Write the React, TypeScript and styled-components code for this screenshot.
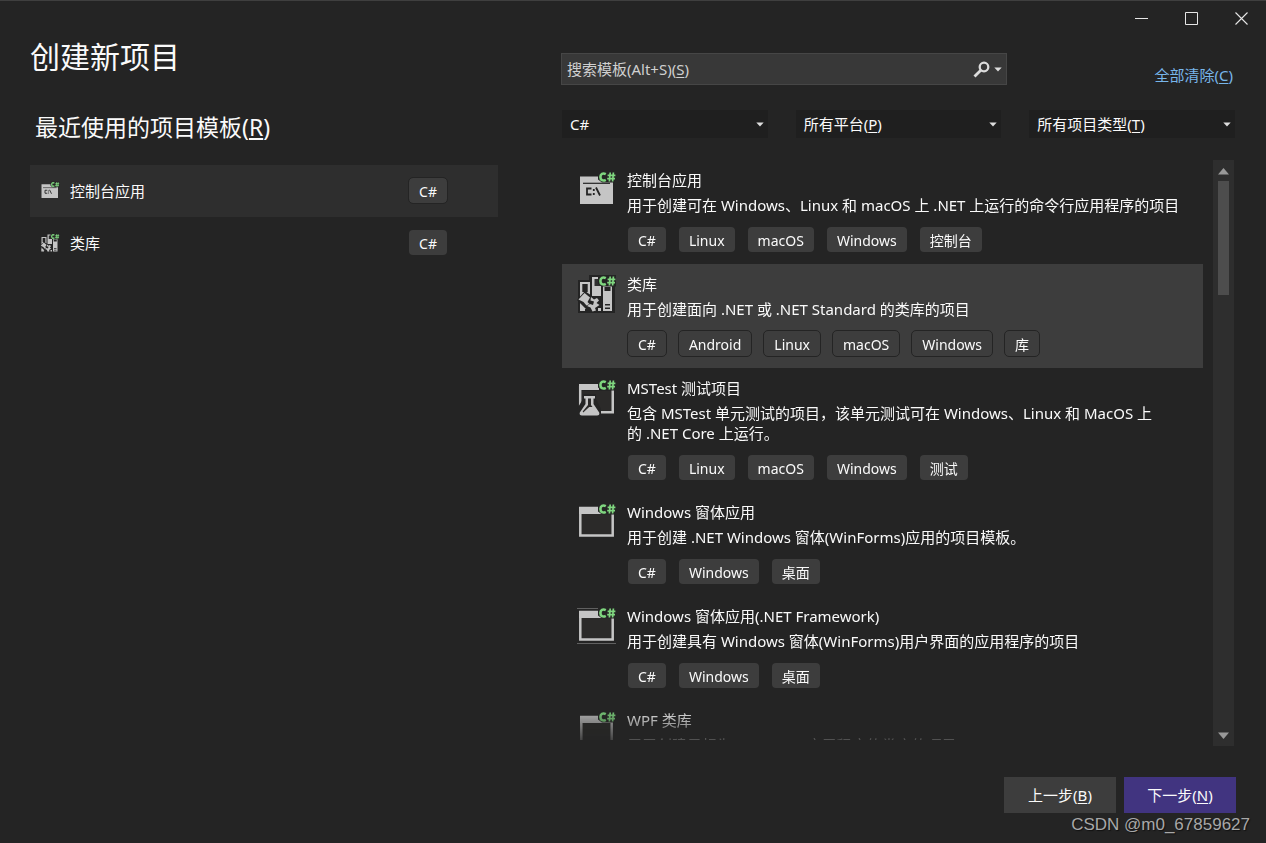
import React, { useId, useState } from "react";
import styled, { createGlobalStyle, css } from "styled-components";

const GlobalStyle = createGlobalStyle`
  *, *::before, *::after { box-sizing: border-box; }
  body {
    margin: 0;
    background: #242424;
    color: #fafafa;
    font: 15px/20px "Noto Sans", "Noto Sans CJK SC", sans-serif;
  }
  button, input, select { font: inherit; color: inherit; }
  h1, h2, h3, p, ul { margin: 0; padding: 0; font-weight: 400; }
  ul { list-style: none; }
`;

const Window = styled.div`
  position: relative;
  display: flex;
  flex-direction: column;
  height: 100vh;
  min-height: 480px;
  border-top: 1px solid #3f3f3f;
`;

const TitleBar = styled.header`
  display: flex;
  justify-content: flex-end;
  height: 36px;
  flex: none;
`;

const CaptionButton = styled.button`
  display: grid;
  place-items: center;
  width: 50px;
  padding: 0 1px 1px 0;
  border: 0;
  background: none;
  &:last-child { width: 49px; padding-right: 0; }
  &:hover { background: #3d3d3d; }
`;

const Content = styled.main`
  flex: 1;
  min-height: 0;
  display: grid;
  grid-template-columns: 468fr 675fr;
  gap: 63px;
  padding: 0 30px;
`;

const RecentPanel = styled.section`
  min-width: 0;
`;

const PageTitle = styled.h1`
  font-size: 30px;
  line-height: 40px;
`;

const RecentHeading = styled.h2`
  margin: 34px 0 22px;
  padding-left: 5px;
  font-size: 23px;
  line-height: 32px;
`;

const RecentItem = styled.li<{ $active?: boolean }>`
  display: flex;
  align-items: center;
  gap: 10px;
  height: 52px;
  padding: 0 50px 1px 10px;
  background: ${(p) => (p.$active ? "#2e2e2e" : "transparent")};
`;

const RecentName = styled.span`
  flex: 1;
`;

const Tag = styled.span<{ $outlined?: boolean }>`
  height: 27px;
  padding: 0 10px;
  border: 1px solid ${(p) => (p.$outlined ? "#242424" : "transparent")};
  border-radius: 5px;
  background: #3d3d3d;
  background-clip: padding-box;
  font-size: 14px;
  line-height: 27px;
  white-space: nowrap;
`;

const BrowsePanel = styled.section`
  min-width: 0;
  min-height: 0;
  display: flex;
  flex-direction: column;
  padding-top: 16px;
`;

const SearchRow = styled.div`
  display: flex;
  justify-content: space-between;
`;

const SearchBox = styled.div`
  position: relative;
  display: flex;
  align-items: center;
  width: 66%;
  height: 32px;
  padding-right: 2px;
  border: 1px solid #464646;
  background: #383838;
`;

const SearchInput = styled.input`
  flex: 1;
  min-width: 0;
  height: 100%;
  padding: 0 5px;
  border: 0;
  outline: 0;
  background: none;
`;

const FloatingLabel = styled.label<{ $muted?: boolean }>`
  position: absolute;
  left: ${(p) => (p.$muted ? 5 : 8)}px;
  top: 50%;
  transform: translateY(-50%);
  pointer-events: none;
  color: ${(p) => (p.$muted ? "#d0d0d0" : "#fafafa")};
`;

const Key = styled.span`
  text-decoration: underline;
  text-underline-offset: 2px;
`;

const IconButton = styled.button`
  display: grid;
  place-items: center;
  padding: 4px 2px;
  border: 0;
  background: none;
`;

const ClearLink = styled.a`
  align-self: flex-end;
  margin-right: 3px;
  color: #78b6ea;
  text-decoration: none;
`;

const Filters = styled.div`
  display: grid;
  grid-template-columns: repeat(3, 1fr);
  gap: 28px;
  margin: 25px 1px 22px;
`;

const FilterBox = styled.div`
  position: relative;
  display: flex;
  align-items: center;
  height: 28px;
  background: #1f1f1f;
  & > svg { position: absolute; right: 4px; pointer-events: none; }
`;

const FilterSelect = styled.select`
  width: 100%;
  height: 100%;
  padding: 0 20px 0 8px;
  border: 0;
  outline: 0;
  appearance: none;
  background: #1f1f1f;
`;

const ListArea = styled.div`
  flex: 1;
  min-height: 0;
  display: flex;
  gap: 10px;
  margin: 0 2px 0 1px;
`;

const TemplateList = styled.ul`
  flex: 1;
  min-width: 0;
  margin-bottom: 6px;
  overflow: hidden;
  mask-image: linear-gradient(#000 calc(100% - 34px), rgba(0, 0, 0, 0.2));
`;

const Template = styled.li<{ $selected?: boolean }>`
  display: flex;
  gap: 10px;
  padding: 10px 16px 11px 15px;
  background: ${(p) => (p.$selected ? "#3d3d3d" : "transparent")};
`;

const TemplateBody = styled.div`
  flex: 1;
  min-width: 0;
`;

const TemplateName = styled.h3`
  font-size: 15px;
  line-height: 20px;
`;

const TemplateText = styled.p`
  margin: 5px 0 11px;
`;

const Tags = styled.div`
  display: flex;
  flex-wrap: wrap;
  gap: 11px;
`;

const ScrollBar = styled.div`
  display: flex;
  flex-direction: column;
  align-items: center;
  width: 21px;
  padding: 8px 0 7px;
  background: #2e2e2e;
`;

const ScrollTrack = styled.div`
  flex: 1;
  width: 11px;
  margin: 6px 0;
`;

const ScrollThumb = styled.div`
  height: 21%;
  background: #4d4d4d;
`;

const Footer = styled.footer`
  display: flex;
  justify-content: flex-end;
  gap: 8px;
  padding: 31px 30px 30px;
`;

const StepButton = styled.button<{ $primary?: boolean }>`
  width: 112px;
  height: 36px;
  padding: 0;
  border: 0;
  ${(p) =>
    p.$primary
      ? css`background: #413480;`
      : css`background: #3d3d3d;`}
`;

const Watermark = styled.div`
  position: absolute;
  right: 16px;
  bottom: 8px;
  color: #a8a8a8;
  font: 17px/20px "Liberation Sans", sans-serif;
  text-shadow: 1px 1px 1px #111;
`;

const Caret = () => (
  <svg width="8" height="5" viewBox="0 0 8 5" aria-hidden="true">
    <path d="M0.3 0.5h7.4L4 4.5z" fill="#dedede" />
  </svg>
);

const ScrollArrow = ({ up }: { up?: boolean }) => (
  <svg width="11" height="7" viewBox="0 0 11 7" aria-hidden="true">
    <path d={up ? "M0 6.5h11L5.5 0z" : "M0 0.5h11L5.5 7z"} fill="#999" />
  </svg>
);

type IconKind = "console" | "library" | "test" | "form" | "framework" | "wpf";

const LIGHT = "#c5c5c5";

const CSharpBadge = () => (
  <g>
    <path d="M21 1h18v11.500H25l-4-3z" fill="#242424" />
    <g fill="none" stroke="#7fd67f">
      <path d="M28.800 4.200C25.800 2.600 23.400 3.900 23.400 7s2.400 4.400 5.400 2.800" strokeWidth="2.600" />
      <path d="M33.200 2.500l-.8 9M36.400 2.500l-.8 9M30.600 5.300h7.800M30.200 8.700h7.800" strokeWidth="1.700" />
    </g>
  </g>
);

const iconShapes: Record<IconKind, React.ReactNode> = {
  console: (
    <>
      <path d="M3 6.500h33V34H3z" fill={LIGHT} />
      <path d="M6 13.300h27" stroke="#242424" strokeWidth="1.200" />
      <path d="M14.500 18.500H10v6h4.500M16.800 19v2M16.800 23v2M19 17.500l4 8" fill="none" stroke="#242424" strokeWidth="1.800" />
    </>
  ),
  library: (
    <>
      <path d="M1 6h11V1h26v38H1z" fill="#242424" />
      <path d="M3 8h10v29H3z" fill={LIGHT} />
      <path d="M5.300 10h5.400v8H5.300z" fill="#242424" />
      <path d="M15 3h9v34h-9z" fill={LIGHT} />
      <path d="M17.500 5H24v7h-6.500z" fill="#303030" />
      <path d="M26 12h9v25h-9z" fill={LIGHT} />
      <path d="M27.500 13h6v4h-6zM28 30h5v1.500h-5zM28 33.500h5V35h-5z" fill="#242424" />
      <path d="M0 26l8-9 7 5h9v17H3v-4h6z" fill="#242424" />
      <path d="M1.500 25.500L7.500 19l5.500 4.500-2.500 4.500 2 2-3 1.500-3-3.500z" fill={LIGHT} />
      <path d="M14 23l3 2.500 3-1.500 2 2.500-2.500 2.500 3 2-4.500 3 1 2.500-3.500 1-2-4-3.500-1.500 3-2 3 1 1-3.500-3.500-1z" fill={LIGHT} />
      <path d="M3 32l2.500 2.500H8V37H3zM21 34h3v3h-3z" fill={LIGHT} />
    </>
  ),
  test: (
    <>
      <path d="M5 13h30v20H5z" fill="#2b2a29" />
      <path d="M2 6h20v6H2z" fill={LIGHT} />
      <path d="M3.200 8v20" stroke={LIGHT} strokeWidth="2.500" />
      <path d="M34.500 12H37v23.500H23V33h11.500z" fill={LIGHT} />
      <path d="M6 16h13v5l5 10v8H0v-8l6-10z" fill="#242424" />
      <path d="M7 18h11v2.500h-1.500V26l5.700 8.500q.8 3-2.200 3H5q-3 0-2.200-3L8.500 26v-5.500H7z" fill={LIGHT} />
      <path d="M11 20.500h3V27l1.500 2h-3.300l-6 5.500-.5-1L11 27z" fill="#2b2a29" />
    </>
  ),
  form: (
    <>
      <path d="M3.300 6h32.400v27.500H3.300z" fill="#2b2a29" stroke={LIGHT} strokeWidth="2.500" />
      <path d="M2 5h35v7H2z" fill={LIGHT} />
    </>
  ),
  framework: (
    <>
      <path d="M0 2.500h38M0 37.500h39" stroke="#606060" />
      <path d="M3.300 6h32.400v27.500H3.300z" fill="#2b2a29" stroke={LIGHT} strokeWidth="2.500" />
      <path d="M2 5h35v7H2z" fill={LIGHT} />
    </>
  ),
  wpf: (
    <>
      <path d="M4.300 7h30.400v27.500H4.300z" fill="#2b2a29" stroke={LIGHT} strokeWidth="2.500" />
      <path d="M3 6h33v7H3z" fill={LIGHT} />
    </>
  ),
};

const TemplateIcon = ({ kind, size = 40 }: { kind: IconKind; size?: number }) => (
  <svg width={size} height={size} viewBox="0 0 40 40" aria-hidden="true">
    {iconShapes[kind]}
    <CSharpBadge />
  </svg>
);

interface TemplateInfo {
  icon: IconKind;
  name: string;
  text: string;
  tags: string[];
}

const templates: TemplateInfo[] = [
  { icon: "console", name: "控制台应用", text: "用于创建可在 Windows、Linux 和 macOS 上 .NET 上运行的命令行应用程序的项目", tags: ["C#", "Linux", "macOS", "Windows", "控制台"] },
  { icon: "library", name: "类库", text: "用于创建面向 .NET 或 .NET Standard 的类库的项目", tags: ["C#", "Android", "Linux", "macOS", "Windows", "库"] },
  { icon: "test", name: "MSTest 测试项目", text: "包含 MSTest 单元测试的项目，该单元测试可在 Windows、Linux 和 MacOS 上的\u00a0.NET Core 上运行。", tags: ["C#", "Linux", "macOS", "Windows", "测试"] },
  { icon: "form", name: "Windows 窗体应用", text: "用于创建 .NET Windows 窗体(WinForms)应用的项目模板。", tags: ["C#", "Windows", "桌面"] },
  { icon: "framework", name: "Windows 窗体应用(.NET Framework)", text: "用于创建具有 Windows 窗体(WinForms)用户界面的应用程序的项目", tags: ["C#", "Windows", "桌面"] },
  { icon: "wpf", name: "WPF 类库", text: "用于创建目标为 .NET WPF 应用程序的类库的项目", tags: [] },
];

const recent: { icon: IconKind; name: string }[] = [
  { icon: "console", name: "控制台应用" },
  { icon: "library", name: "类库" },
];

interface FilterProps {
  label: string;
  hotkey?: string;
  options: string[];
  initial?: string;
}

const Filter = ({ label, hotkey, options, initial = "" }: FilterProps) => {
  const id = useId();
  const [value, setValue] = useState(initial);
  return (
    <FilterBox>
      <FilterSelect id={id} aria-label={label} value={value} onChange={(e) => setValue(e.target.value)}>
        <option value="" />
        {options.map((o) => (
          <option key={o}>{o}</option>
        ))}
      </FilterSelect>
      {!value && (
        <FloatingLabel htmlFor={id}>
          {label}(<Key>{hotkey}</Key>)
        </FloatingLabel>
      )}
      <Caret />
    </FilterBox>
  );
};

export default function App() {
  const [query, setQuery] = useState("");
  return (
    <>
      <GlobalStyle />
      <Window>
        <TitleBar>
          <CaptionButton aria-label="最小化">
            <svg width="13" height="13" viewBox="0 0 13 13"><path d="M0 6.500h13" stroke="#e6e6e6" /></svg>
          </CaptionButton>
          <CaptionButton aria-label="最大化">
            <svg width="13" height="13" viewBox="0 0 13 13"><path d="M.5.5h12v12H.5z" fill="none" stroke="#e6e6e6" /></svg>
          </CaptionButton>
          <CaptionButton aria-label="关闭">
            <svg width="13" height="13" viewBox="0 0 13 13"><path d="M.5.5l12 12M12.500.5l-12 12" stroke="#e6e6e6" strokeWidth="1.100" /></svg>
          </CaptionButton>
        </TitleBar>
        <Content>
          <RecentPanel>
            <PageTitle>创建新项目</PageTitle>
            <RecentHeading>
              最近使用的项目模板(<Key>R</Key>)
            </RecentHeading>
            <ul>
              {recent.map((r, i) => (
                <RecentItem key={r.name} $active={i === 0}>
                  <TemplateIcon kind={r.icon} size={20} />
                  <RecentName>{r.name}</RecentName>
                  <Tag $outlined={i === 0}>C#</Tag>
                </RecentItem>
              ))}
            </ul>
          </RecentPanel>
          <BrowsePanel>
            <SearchRow>
              <SearchBox>
                <SearchInput id="search" value={query} onChange={(e) => setQuery(e.target.value)} />
                {!query && (
                  <FloatingLabel htmlFor="search" $muted>
                    搜索模板(Alt+S)(<Key>S</Key>)
                  </FloatingLabel>
                )}
                <IconButton aria-label="搜索">
                  <svg width="17" height="17" viewBox="0 0 17 17" fill="none" stroke="#dcdcdc">
                    <circle cx="11" cy="6" r="4.300" strokeWidth="2.300" />
                    <path d="M7.800 9.200L1.500 15.500" strokeWidth="2.800" />
                  </svg>
                </IconButton>
                <IconButton aria-label="搜索选项">
                  <Caret />
                </IconButton>
              </SearchBox>
              <ClearLink href="#clear">
                全部清除(<Key>C</Key>)
              </ClearLink>
            </SearchRow>
            <Filters>
              <Filter label="语言" options={["C#", "F#", "Visual Basic"]} initial="C#" />
              <Filter label="所有平台" hotkey="P" options={["Windows", "Linux", "macOS"]} />
              <Filter label="所有项目类型" hotkey="T" options={["控制台", "库", "桌面", "测试"]} />
            </Filters>
            <ListArea>
              <TemplateList>
                {templates.map((t, i) => (
                  <Template key={t.name} $selected={i === 1}>
                    <TemplateIcon kind={t.icon} />
                    <TemplateBody>
                      <TemplateName>{t.name}</TemplateName>
                      <TemplateText>{t.text}</TemplateText>
                      <Tags>
                        {t.tags.map((tag) => (
                          <Tag key={tag} $outlined={i === 1}>{tag}</Tag>
                        ))}
                      </Tags>
                    </TemplateBody>
                  </Template>
                ))}
              </TemplateList>
              <ScrollBar>
                <ScrollArrow up />
                <ScrollTrack>
                  <ScrollThumb />
                </ScrollTrack>
                <ScrollArrow />
              </ScrollBar>
            </ListArea>
          </BrowsePanel>
        </Content>
        <Footer>
          <StepButton>
            上一步(<Key>B</Key>)
          </StepButton>
          <StepButton $primary>
            下一步(<Key>N</Key>)
          </StepButton>
        </Footer>
        <Watermark>CSDN @m0_67859627</Watermark>
      </Window>
    </>
  );
}
